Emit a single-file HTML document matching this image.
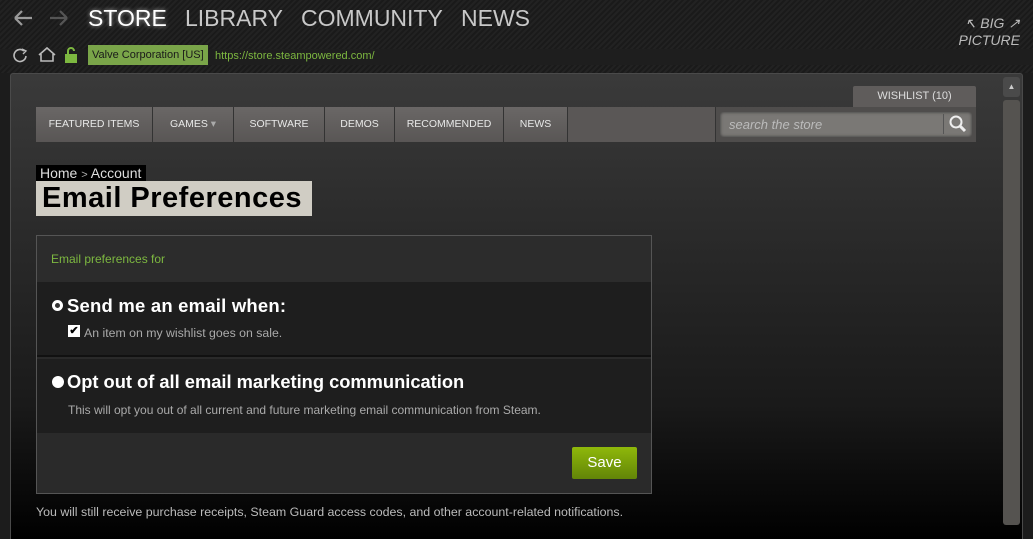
<!DOCTYPE html>
<html><head><style>
*{margin:0;padding:0;box-sizing:border-box}
html,body{width:1033px;height:539px;overflow:hidden}
body{background:#1c1c1c;font-family:"Liberation Sans",Arial,sans-serif;position:relative}
.top{position:absolute;left:0;top:0;width:1033px;height:73px;background:repeating-linear-gradient(135deg,#222 0 2px,#1a1a1a 2px 4px)}
.nav{position:absolute;top:5px;font-size:23px;color:#c8c8c8}
.urlbar{position:absolute;left:0;top:49px;width:1033px;height:16px;background:#1e1e1e}
.abs{position:absolute;white-space:nowrap}
.frame{position:absolute;left:10px;top:73px;width:1013px;height:466px;border:1px solid #4a4a4a;border-bottom:none;border-radius:3px 3px 0 0;background:linear-gradient(#3a3a3a 0,#2e2e2e 120px,#1a1a1a 330px,#000 466px)}
.tab{position:absolute;top:107px;height:35px;background:linear-gradient(#6a6766,#595655);color:#e8e8e8;font-size:10.5px;line-height:35px;text-align:center;border-right:1px solid #333}
</style></head><body>
<div class="top"></div>
<svg class="abs" style="left:12px;top:8px" width="60" height="20"><path d="M3 10H20M3 10L10 3M3 10L10 17" stroke="#9a9a9a" stroke-width="2.2" fill="none"/><path d="M55 10H38M55 10L48 3M55 10L48 17" stroke="#555" stroke-width="2.2" fill="none"/></svg>
<div class="nav" style="left:88px;color:#fff;text-shadow:0 0 4px #aaa">STORE</div>
<div class="nav" style="left:185px">LIBRARY</div>
<div class="nav" style="left:301px">COMMUNITY</div>
<div class="nav" style="left:461px">NEWS</div>
<div class="urlbar"></div>
<div class="abs" style="left:940px;top:15px;color:#bbb;font-size:14px;font-style:italic;line-height:17px;text-align:right;width:80px">↖ BIG ↗<br>PICTURE</div>
<svg class="abs" style="left:11px;top:46px" width="72" height="18"><path d="M13 5A6 6 0 1 0 15 10" stroke="#bbb" stroke-width="1.6" fill="none"/><path d="M11 3L15 5L12 8" stroke="#bbb" stroke-width="1.4" fill="none"/><path d="M28 9L36 2L44 9M30 8V15H42V8" stroke="#bbb" stroke-width="1.6" fill="none"/><rect x="54" y="8" width="12" height="9" fill="#7db840"/><path d="M57 8V5A3 3 0 0 1 63 5" stroke="#7db840" stroke-width="2" fill="none"/></svg>
<div class="abs" style="left:88px;top:45px;height:20px;width:120px;background:#7aa549;color:#1a1a1a;font-size:11px;line-height:20px;padding-left:4px">Valve Corporation [US]</div>
<div class="abs" style="left:215px;top:50px;color:#7db840;font-size:11px">https://store.steampowered.com/</div>
<div class="frame"></div>
<div class="abs" style="left:1003px;top:77px;width:17px;height:20px;background:#4a4a4a;border-radius:3px;color:#ccc;font-size:8px;text-align:center;line-height:20px">▲</div>
<div class="abs" style="left:1003px;top:100px;width:17px;height:425px;background:#555350;border-radius:3px"></div>
<div class="abs" style="left:853px;top:86px;width:123px;height:21px;background:#5f5c5b;color:#ddd;font-size:11px;text-align:center;line-height:21px;border-radius:2px 2px 0 0">WISHLIST (10)</div>
<div class="abs" style="left:36px;top:107px;width:940px;height:35px;background:#5a5756"></div>
<div class="tab" style="left:36px;width:117px">FEATURED ITEMS</div>
<div class="tab" style="left:153px;width:81px">GAMES <span style="color:#aaa">▾</span></div>
<div class="tab" style="left:234px;width:91px">SOFTWARE</div>
<div class="tab" style="left:325px;width:70px">DEMOS</div>
<div class="tab" style="left:395px;width:109px">RECOMMENDED</div>
<div class="tab" style="left:504px;width:64px">NEWS</div>
<div class="abs" style="left:715px;top:107px;width:261px;height:35px;background:#4f4d4c;border-left:1px solid #333"></div>
<div class="abs" style="left:720px;top:112px;width:252px;height:25px;background:#7a7875;border-radius:3px;box-shadow:inset 0 0 3px #333;color:#bbb;font-style:italic;font-size:13px;line-height:25px;padding-left:9px">search the store</div>
<div class="abs" style="left:943px;top:114px;width:1px;height:20px;background:#555"></div>
<svg class="abs" style="left:947px;top:113px" width="22" height="22"><circle cx="9" cy="9" r="5.5" stroke="#eee" stroke-width="2" fill="none"/><path d="M13 13L18 18" stroke="#eee" stroke-width="3"/></svg>
<div class="abs" style="left:36px;top:165px;width:110px;height:16px;background:#000;color:#ddd;font-size:14px;line-height:16px;padding-left:4px">Home <span style="font-size:11px;color:#aaa">&gt;</span> Account</div>
<div class="abs" style="left:36px;top:181px;width:276px;height:35px;background:#d0cdc4;color:#000;font-size:29px;font-weight:bold;line-height:35px;padding-left:6px;letter-spacing:0.5px">Email Preferences</div>
<div class="abs" style="left:36px;top:235px;width:616px;height:259px;border:1px solid #555;background:#2a2a2a"></div>
<div class="abs" style="left:37px;top:236px;width:614px;height:46px;background:#2c2c2c;color:#7db840;font-size:12px;line-height:46px;padding-left:14px">Email preferences for</div>
<div class="abs" style="left:37px;top:282px;width:614px;height:75px;background:#1e1e1e;border-bottom:2px solid #111"></div>
<div class="abs" style="left:37px;top:359px;width:614px;height:74px;background:#1e1e1e"></div>
<div class="abs" style="left:52px;top:300px;width:11px;height:11px;border-radius:50%;border:3px solid #fff;background:#333"></div>
<div class="abs" style="left:67px;top:295px;color:#fff;font-size:18.5px;font-weight:bold;letter-spacing:0.2px">Send me an email when:</div>
<div class="abs" style="left:68px;top:325px;width:12px;height:12px;background:#fff;color:#000;font-size:11px;line-height:12px;text-align:center;font-weight:bold">✔</div>
<div class="abs" style="left:84px;top:326px;color:#aaa;font-size:12.3px">An item on my wishlist goes on sale.</div>
<div class="abs" style="left:52px;top:376px;width:12px;height:12px;border-radius:50%;background:#fff"></div>
<div class="abs" style="left:67px;top:371px;color:#fff;font-size:18.3px;font-weight:bold">Opt out of all email marketing communication</div>
<div class="abs" style="left:68px;top:403px;color:#aaa;font-size:12px">This will opt you out of all current and future marketing email communication from Steam.</div>
<div class="abs" style="left:572px;top:447px;width:65px;height:32px;background:linear-gradient(#8fb80a,#628508);border-radius:2px;color:#fff;font-size:15px;line-height:32px;text-align:center">Save</div>
<div class="abs" style="left:36px;top:505px;color:#bbb;font-size:12.4px">You will still receive purchase receipts, Steam Guard access codes, and other account-related notifications.</div>
</body></html>
